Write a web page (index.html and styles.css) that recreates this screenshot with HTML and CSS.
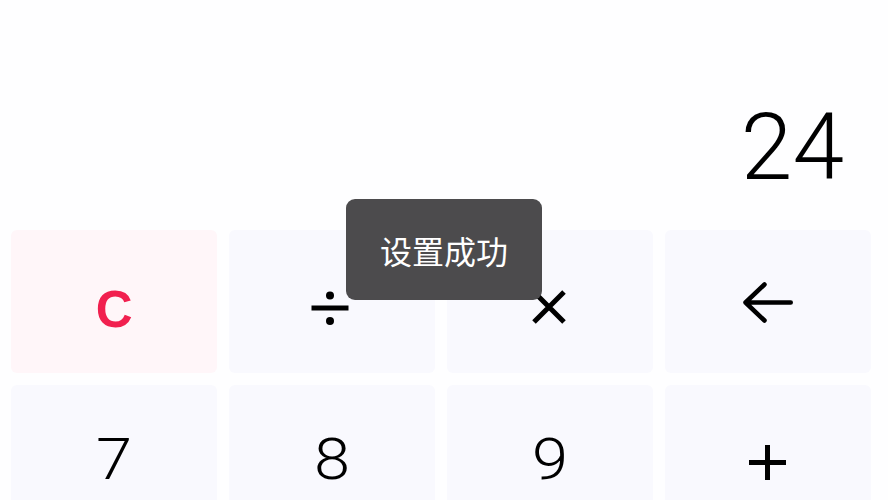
FILE: index.html
```html
<!DOCTYPE html>
<html lang="zh-CN">
<head>
<meta charset="utf-8">
<title>计算器</title>
<link rel="stylesheet" href="styles.css">
</head>
<body>
<div class="app">
  <div class="display"><span class="result">24</span></div>
  <div class="keys">
    <div class="key key-clear"><span class="clear-label">C</span></div>
    <div class="key">
      <svg class="icon icon-div" width="38" height="38" viewBox="0 0 38 38"><circle cx="19" cy="6.5" r="4" fill="#000"/><rect x="0.5" y="16.5" width="37" height="5" fill="#000"/><circle cx="19" cy="32" r="4" fill="#000"/></svg>
    </div>
    <div class="key">
      <svg class="icon icon-mul" width="34" height="34" viewBox="0 0 34 34"><path d="M2 2 L32 32 M32 2 L2 32" stroke="#000" stroke-width="5" fill="none"/></svg>
    </div>
    <div class="key">
      <svg class="icon icon-back" width="54" height="45" viewBox="0 0 54 45"><path d="M49.75 22.5 H4.5 M23.5 4.5 L4.5 22.5 L23.5 40.5" stroke="#000" stroke-width="4.5" stroke-linecap="round" stroke-linejoin="round" fill="none"/></svg>
    </div>
    <div class="key"><span class="digit">7</span></div>
    <div class="key"><span class="digit">8</span></div>
    <div class="key"><span class="digit">9</span></div>
    <div class="key">
      <svg class="icon icon-plus" width="37" height="37" viewBox="0 0 37 37"><path d="M0 18.5 H37 M18.5 1 V36" stroke="#000" stroke-width="5" fill="none"/></svg>
    </div>
  </div>
  <div class="toast">设置成功</div>
</div>
</body>
</html>
```
FILE: styles.css
```css
html, body {
  margin: 0;
  padding: 0;
  background: #fefeff;
  height: 500px;
  overflow: hidden;
}

.app {
  position: relative;
  display: flex;
  flex-direction: column;
  font-family: Roboto, "Liberation Sans", "Noto Sans CJK SC", sans-serif;
  color: #000;
}

.display {
  height: 230px;
  box-sizing: border-box;
  display: flex;
  justify-content: flex-end;
  align-items: flex-end;
  padding: 0 44px 36px 0;
}

.result {
  font-size: 93px;
  font-weight: 300;
  line-height: 1;
}

.keys {
  display: grid;
  grid-template-columns: repeat(4, 1fr);
  column-gap: 11.5px;
  row-gap: 12px;
  padding: 0 17px 0 11px;
}

.key {
  height: 143px;
  border-radius: 6px;
  background: #f9f9fe;
  display: flex;
  align-items: center;
  justify-content: center;
}

.key-clear {
  background: #fff6f9;
}

.clear-label {
  font-family: "Liberation Sans", Arial, sans-serif;
  font-weight: 700;
  font-size: 51px;
  line-height: 1;
  color: #f1204f;
  margin-top: 15px;
}

.icon {
  display: block;
}

.icon-div {
  margin-top: 12px;
  margin-right: 4px;
}

.icon-mul {
  margin-top: 11px;
  margin-right: 2px;
}

.icon-back {
  margin-top: 2px;
}

.icon-plus {
  margin-top: 12px;
}

.digit {
  font-size: 58px;
  font-weight: 300;
  line-height: 1;
  margin-top: 4px;
  transform: scaleX(1.12);
}

.toast {
  position: absolute;
  left: 346px;
  top: 199px;
  width: 196px;
  height: 101px;
  border-radius: 9px;
  background: #4c4b4d;
  color: #fff;
  display: flex;
  align-items: center;
  justify-content: center;
  font-family: "Noto Sans CJK SC", sans-serif;
  font-size: 32px;
}
```
